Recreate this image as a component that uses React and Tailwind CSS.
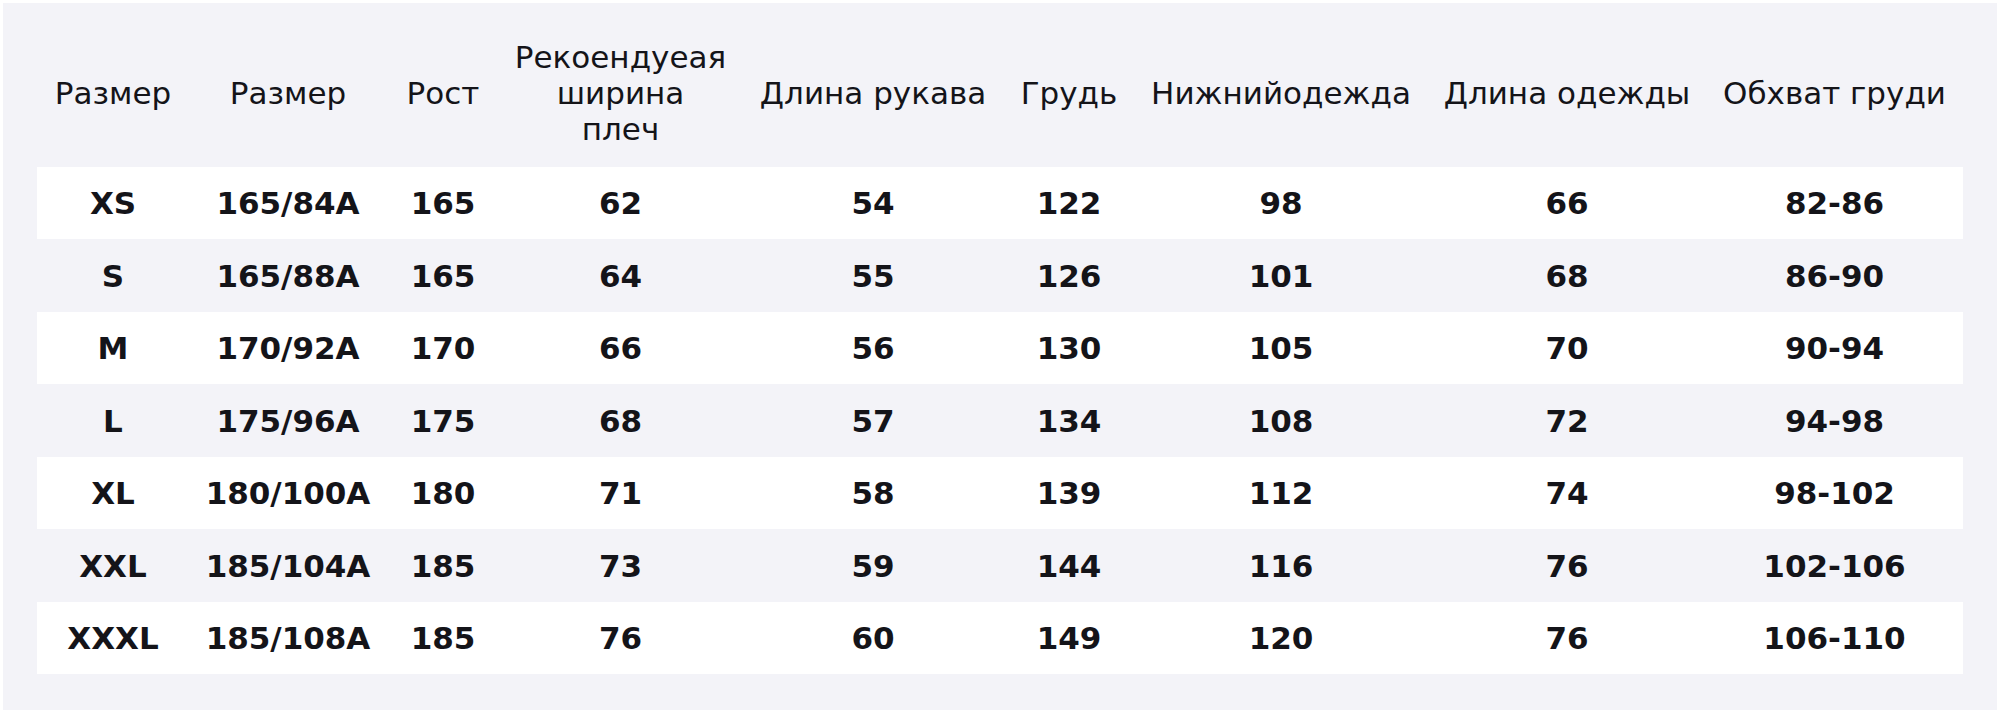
const headers = [
  ["Размер"],
  ["Размер"],
  ["Рост"],
  ["Рекоендуеая", "ширина", "плеч"],
  ["Длина рукава"],
  ["Грудь"],
  ["Нижнийодежда"],
  ["Длина одежды"],
  ["Обхват груди"],
];

const rows = [
  ["XS", "165/84A", "165", "62", "54", "122", "98", "66", "82-86"],
  ["S", "165/88A", "165", "64", "55", "126", "101", "68", "86-90"],
  ["M", "170/92A", "170", "66", "56", "130", "105", "70", "90-94"],
  ["L", "175/96A", "175", "68", "57", "134", "108", "72", "94-98"],
  ["XL", "180/100A", "180", "71", "58", "139", "112", "74", "98-102"],
  ["XXL", "185/104A", "185", "73", "59", "144", "116", "76", "102-106"],
  ["XXXL", "185/108A", "185", "76", "60", "149", "120", "76", "106-110"],
];

const cols = "grid grid-cols-[152px_198px_112px_243px_262px_130px_294px_278px_257px]";

export default function App() {
  return (
    <div className="bg-white p-[3px] w-[2000px] h-[713px] font-['DejaVu_Sans',sans-serif] text-[#141419]">
      <div className="bg-[#f3f3f8] w-[1994px] h-[707px] px-[34px] pt-[34px] pb-[35px]">
        {/* header */}
        <div className={`${cols} h-[130px]`}>
          {headers.map((lines, i) => (
            <div key={i} className="flex items-center justify-center pb-[19px] text-[31px] leading-[36px] text-center whitespace-nowrap">
              <div>
                {lines.map((l, j) => (
                  <div key={j}>{l}</div>
                ))}
              </div>
            </div>
          ))}
        </div>

        {/* body */}
        {rows.map((row, r) => (
          <div
            key={r}
            className={`${cols} h-[72.5px] border-b-[1.5px] border-[#f3f3f8] ${r % 2 === 0 ? "bg-white" : "bg-[#f3f3f8]"}`}
          >
            {row.map((cell, c) => (
              <div key={c} className="flex items-center justify-center pt-[1px] text-[31px] font-bold whitespace-nowrap">
                {cell}
              </div>
            ))}
          </div>
        ))}
      </div>
    </div>
  );
}
